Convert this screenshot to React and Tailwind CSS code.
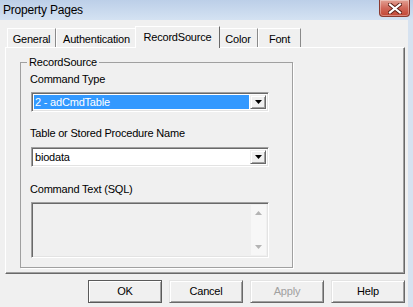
import React from "react";

const font = { fontFamily: '"Liberation Sans", Arial, sans-serif' };

function Tab({ label, w, selected }) {
  if (selected) {
    return (
      <div
        className={`relative z-10 -mx-[2px] -mb-px flex h-[22px] items-start justify-center border-l border-t border-r border-l-white border-t-white border-r-[#696969] bg-[#f0f0f0] pt-[4px] text-[11px] leading-[13px] tracking-[-0.2px] text-black ${w}`}
      >
        {label}
      </div>
    );
  }
  return (
    <div
      className={`flex h-[19px] items-start justify-center border-l border-t border-r border-l-white border-t-white border-r-[#8a8a8a] bg-[#f0f0f0] pt-[4px] text-[11px] leading-[13px] tracking-[-0.2px] text-black ${w}`}
    >
      {label}
    </div>
  );
}

function DropButton() {
  return (
    <div className="flex h-full w-[16px] items-center justify-center border border-t-[#f0f0f0] border-l-[#f0f0f0] border-r-[#696969] border-b-[#696969] bg-[#f0f0f0] shadow-[inset_1px_1px_0_#ffffff,inset_-1px_-1px_0_#a0a0a0]">
      <svg width="7" height="4" viewBox="0 0 7 4">
        <polygon points="0,0 7,0 3.5,4" fill="#000" />
      </svg>
    </div>
  );
}

function Combo({ value, highlighted }) {
  return (
    <div className="ml-px flex h-[20px] w-[238px] border border-t-[#a0a0a0] border-l-[#a0a0a0] border-r-white border-b-white bg-white shadow-[inset_1px_1px_0_#696969,inset_-1px_-1px_0_#e3e3e3] p-[2px]">
      <div
        className={`flex flex-1 items-center pl-[1px] text-[11px] leading-[13px] tracking-[-0.2px] ${
          highlighted ? "bg-[#3399ff] text-white" : "bg-white text-black"
        }`}
      >
        {value}
      </div>
      <div className="ml-[1px] h-full">
        <DropButton />
      </div>
    </div>
  );
}

function ActionButton({ label, disabled, isDefault }) {
  return (
    <div
      className={`flex h-[23px] w-[74px] items-center justify-center border text-[11px] leading-[13px] tracking-[-0.2px] ${
        isDefault
          ? "border-[#5a5a5a] shadow-[inset_1px_1px_0_#ffffff,inset_-1px_-1px_0_#a0a0a0]"
          : "border-t-[#e3e3e3] border-l-[#e3e3e3] border-r-[#696969] border-b-[#696969] shadow-[inset_1px_1px_0_#ffffff,inset_-1px_-1px_0_#a0a0a0]"
      } bg-[#f0f0f0] ${disabled ? "text-[#a0a0a0]" : "text-black"}`}
    >
      {label}
    </div>
  );
}

export default function App() {
  return (
    <div style={font} className="flex h-[307px] w-[413px] flex-col overflow-hidden bg-[#f0f0f0]">
      {/* Title bar */}
      <div className="flex h-[20px] shrink-0 items-start justify-between bg-gradient-to-b from-[#bccfe8] to-[#d4e2f2]">
        <div className="pl-[3px] pt-[3px] text-[12px] leading-[14px] tracking-[-0.2px] text-black">
          Property Pages
        </div>
        <div className="mr-[3px] flex h-[17px] w-[31px] items-center justify-center rounded-b-[4px] border border-t-0 border-[#8b3a2f] bg-gradient-to-b from-[#e2a194] via-[#d0685a] to-[#c24533] shadow-[inset_0_0_0_1px_rgba(255,255,255,0.35)]">
          <svg width="14" height="11" viewBox="0 0 14 11">
            <path d="M2 1.5 L12 9.5 M12 1.5 L2 9.5" stroke="#5a1d14" strokeWidth="4" strokeLinecap="square" />
            <path d="M2 1.5 L12 9.5 M12 1.5 L2 9.5" stroke="#ffffff" strokeWidth="2.2" strokeLinecap="square" />
          </svg>
        </div>
      </div>

      <div className="flex flex-1">
        <div className="flex w-[408px] flex-col">
          {/* Tabs */}
          <div className="flex h-[27px] items-end pl-[7px]">
            <Tab label="General" w="w-[49px]" />
            <Tab label="Authentication" w="w-[81px]" />
            <Tab label="RecordSource" w="w-[85px]" selected />
            <Tab label="Color" w="w-[40px]" />
            <Tab label="Font" w="w-[43px]" />
          </div>

          {/* Panel */}
          <div className="ml-[5px] h-[227px] w-[400px] border border-t-white border-l-white border-r-[#696969] border-b-[#696969] pl-[14px] pt-[8px] shadow-[inset_-1px_-1px_0_#a0a0a0]">
            <fieldset className="h-[212px] w-[273px] border border-[#a0a0a0] shadow-[1px_1px_0_#ffffff]">
              <legend className="ml-[6px] px-[2px] text-[11px] leading-[13px] tracking-[-0.2px] text-black">
                RecordSource
              </legend>
              <div className="flex flex-col pl-[9px] pt-[4px]">
                <div className="h-[13px] text-[11px] leading-[13px] tracking-[-0.2px] text-black">Command Type</div>
                <div className="mt-[6px]">
                  <Combo value="2 - adCmdTable" highlighted />
                </div>
                <div className="mt-[15px] h-[13px] text-[11px] leading-[13px] tracking-[-0.2px] text-black">
                  Table or Stored Procedure Name
                </div>
                <div className="mt-[7px]">
                  <Combo value="biodata" />
                </div>
                <div className="mt-[16px] h-[13px] text-[11px] leading-[13px] tracking-[-0.2px] text-black">
                  Command Text (SQL)
                </div>
                <div className="ml-px mt-[6px] flex h-[56px] w-[238px] border border-t-[#a0a0a0] border-l-[#a0a0a0] border-r-white border-b-white bg-[#f0f0f0] shadow-[inset_1px_1px_0_#696969,inset_-1px_-1px_0_#e3e3e3] p-[2px]">
                  <div className="flex-1" />
                  <div className="flex w-[15px] flex-col items-center justify-between bg-[#f7f7f7] py-[6px]">
                    <svg width="7" height="4" viewBox="0 0 7 4">
                      <polygon points="0,4 7,4 3.5,0" fill="#b4b4b4" />
                    </svg>
                    <svg width="7" height="4" viewBox="0 0 7 4">
                      <polygon points="0,0 7,0 3.5,4" fill="#b4b4b4" />
                    </svg>
                  </div>
                </div>
              </div>
            </fieldset>
          </div>

          {/* Buttons */}
          <div className="mt-[6px] flex gap-[7px] pl-[88px]">
            <ActionButton label="OK" isDefault />
            <ActionButton label="Cancel" />
            <ActionButton label="Apply" disabled />
            <ActionButton label="Help" />
          </div>
        </div>
        <div className="w-[5px] bg-[#d6e2f0]" />
      </div>
    </div>
  );
}
